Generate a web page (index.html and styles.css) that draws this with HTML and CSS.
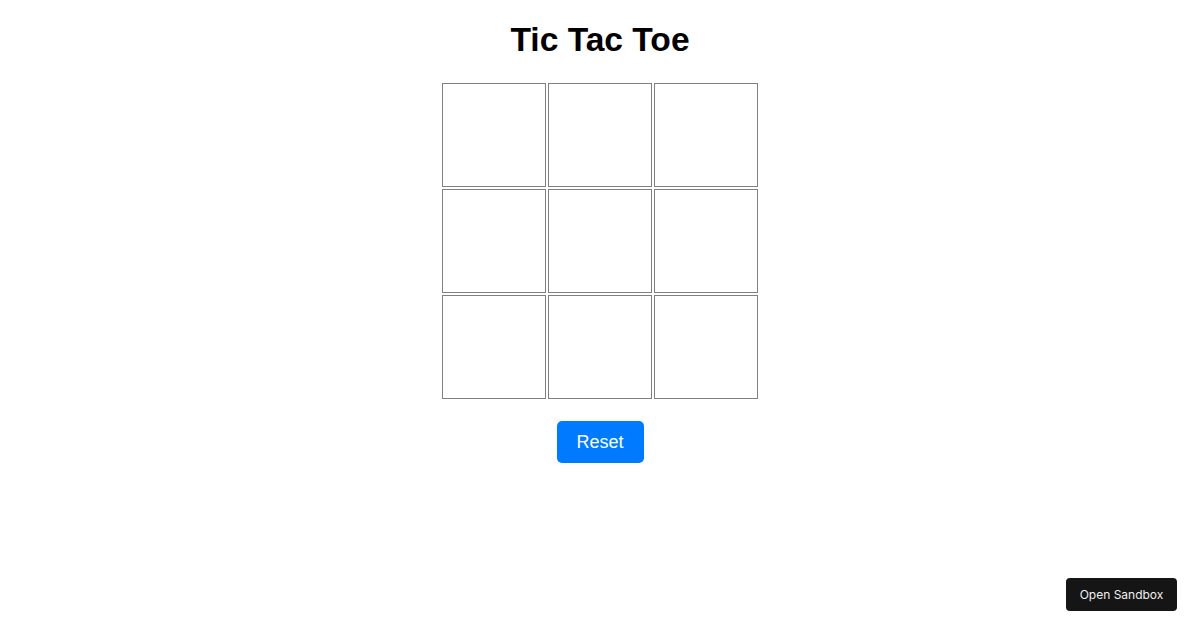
FILE: index.html
```html
<!DOCTYPE html>
<html lang="en">
<head>
  <meta charset="UTF-8" />
  <meta name="viewport" content="width=device-width, initial-scale=1.0"/>
  <title>Tic Tac Toe</title>
  <link rel="stylesheet" href="styles.css">
</head>
<body>

  <div class="game">
    <h1>Tic Tac Toe</h1>

    <div class="board">
      <div class="cell"></div>
      <div class="cell"></div>
      <div class="cell"></div>
      <div class="cell"></div>
      <div class="cell"></div>
      <div class="cell"></div>
      <div class="cell"></div>
      <div class="cell"></div>
      <div class="cell"></div>
    </div>

    <button class="reset">Reset</button>
  </div>

  <a class="sandbox" href="#">Open Sandbox</a>
</body>
</html>
```

FILE: styles.css
```css
body {
  margin: 0;
  font-family: 'Liberation Sans', Arial, sans-serif;
  background-color: #ffffff;
  color: #000;
}
.game {
  display: flex;
  flex-direction: column;
  align-items: center;
}
h1 {
  font-size: 33.6px;
  margin: 21px 0 24px;
  line-height: 38px;
}
.board {
  display: grid;
  grid-template-columns: repeat(3, 104px);
  grid-template-rows: repeat(3, 104px);
  gap: 2px;
}
.cell {
  border: 1px solid #808080;
  background: #fff;
}
.reset {
  margin-top: 22px;
  width: 87px;
  height: 42px;
  background-color: #007bff;
  color: #fff;
  border: none;
  border-radius: 5px;
  font-family: 'Liberation Sans', Arial, sans-serif;
  font-size: 18px;
  cursor: pointer;
}
.sandbox {
  position: fixed;
  right: 23px;
  bottom: 19px;
  width: 111px;
  height: 33px;
  display: flex;
  align-items: center;
  justify-content: center;
  background-color: #151515;
  color: #f0f0f0;
  border-radius: 4px;
  font-family: Inter, 'Noto Sans', sans-serif;
  font-size: 12px;
  text-decoration: none;
}
```
